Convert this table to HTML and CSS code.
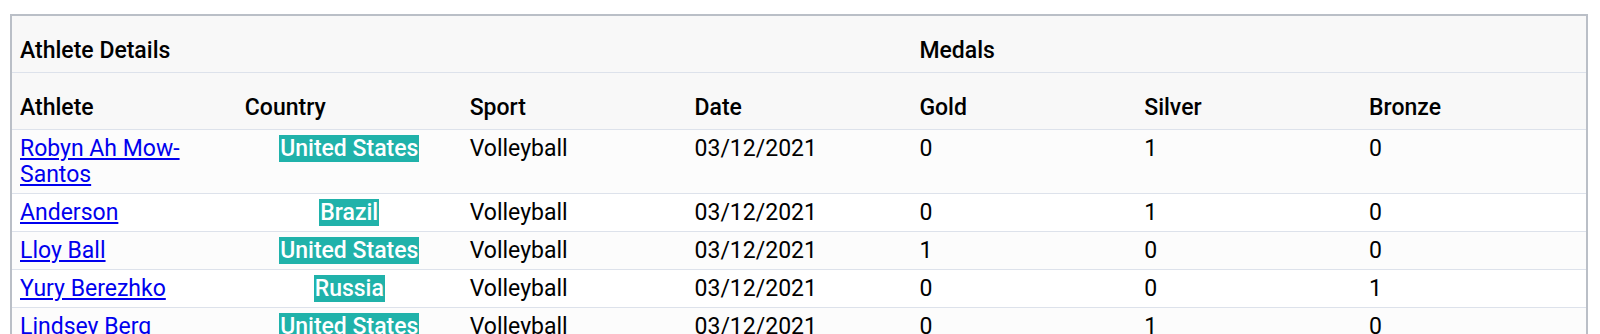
FILE: index.html
```html
<!DOCTYPE html>
<html lang="en">
<head>
<meta charset="utf-8">
<title>Olympic Athletes</title>
<link rel="stylesheet" href="styles.css">
</head>
<body>
<div class="page">
  <table class="grid">
    <colgroup>
      <col><col><col><col><col><col><col>
    </colgroup>
    <thead>
      <tr class="group-row">
        <th colspan="4">Athlete Details</th>
        <th colspan="3">Medals</th>
      </tr>
      <tr class="col-row">
        <th>Athlete</th>
        <th>Country</th>
        <th>Sport</th>
        <th>Date</th>
        <th>Gold</th>
        <th>Silver</th>
        <th>Bronze</th>
      </tr>
    </thead>
    <tbody>
      <tr>
        <td><a href="#">Robyn Ah Mow-Santos</a></td>
        <td class="country"><span class="badge">United States</span></td>
        <td>Volleyball</td>
        <td>03/12/2021</td>
        <td>0</td>
        <td>1</td>
        <td>0</td>
      </tr>
      <tr>
        <td><a href="#">Anderson</a></td>
        <td class="country"><span class="badge">Brazil</span></td>
        <td>Volleyball</td>
        <td>03/12/2021</td>
        <td>0</td>
        <td>1</td>
        <td>0</td>
      </tr>
      <tr>
        <td><a href="#">Lloy Ball</a></td>
        <td class="country"><span class="badge">United States</span></td>
        <td>Volleyball</td>
        <td>03/12/2021</td>
        <td>1</td>
        <td>0</td>
        <td>0</td>
      </tr>
      <tr>
        <td><a href="#">Yury Berezhko</a></td>
        <td class="country"><span class="badge">Russia</span></td>
        <td>Volleyball</td>
        <td>03/12/2021</td>
        <td>0</td>
        <td>0</td>
        <td>1</td>
      </tr>
      <tr>
        <td><a href="#">Lindsey Berg</a></td>
        <td class="country"><span class="badge">United States</span></td>
        <td>Volleyball</td>
        <td>03/12/2021</td>
        <td>0</td>
        <td>1</td>
        <td>0</td>
      </tr>
    </tbody>
  </table>
</div>
</body>
</html>
```

FILE: styles.css
```css
html, body {
  margin: 0;
  padding: 0;
  background: #ffffff;
}

body {
  font-family: Roboto, "Liberation Sans", Arial, sans-serif;
  font-size: 23px;
  color: #181d1f;
}

.page {
  padding: 14px 0 0 10px;
}

.grid {
  width: 1578px;
  table-layout: fixed;
  border-collapse: separate;
  border-spacing: 0;
  border: 2px solid #babfc7;
}

.grid th,
.grid td {
  text-align: left;
  line-height: 26px;
  padding-left: 8px;
  padding-right: 8px;
}

.grid th {
  background: #f8f8f8;
  font-weight: 500;
  padding-top: 22px;
  padding-bottom: 8px;
  border-bottom: 1px solid #dde2eb;
  vertical-align: bottom;
  color: #000000;
}

.grid td {
  padding-top: 6px;
  padding-bottom: 5px;
  border-bottom: 1px solid #dde2eb;
  vertical-align: top;
  color: #000000;
}

.grid tbody tr:nth-child(odd) td {
  background: #fcfcfc;
}

.grid tbody tr:nth-child(even) td {
  background: #ffffff;
}

.grid a {
  color: #0000ee;
  text-decoration: underline;
}

.grid td.country {
  text-align: center;
}

.badge {
  background: #20b2aa;
  color: #ffffff;
  font-weight: 500;
  padding: 0 1px;
}
```
